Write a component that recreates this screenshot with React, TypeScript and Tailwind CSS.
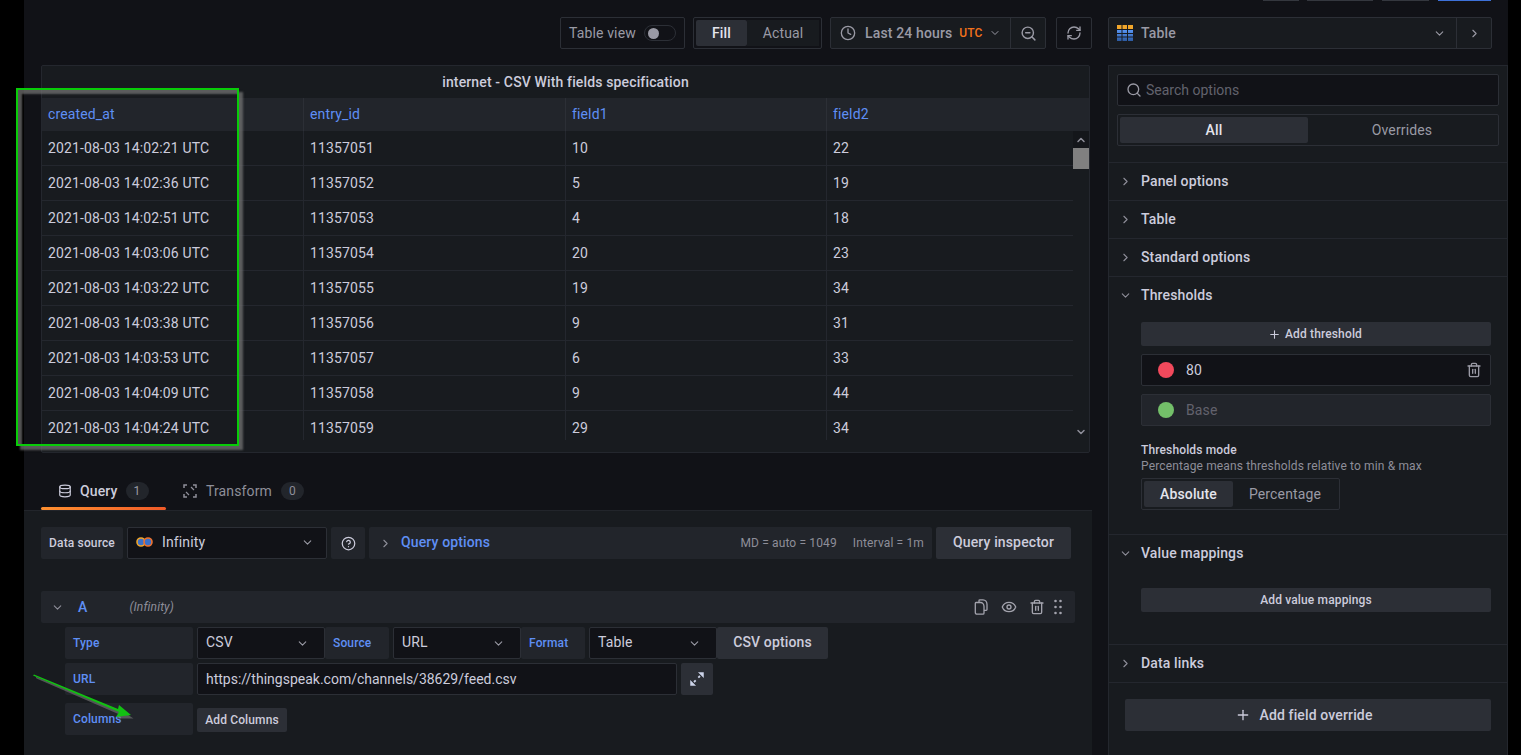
import { ChevronDown, ChevronRight, CircleHelp, Clock, Database, Eye, Plus, RefreshCw, Search, Trash2, ZoomOut } from "lucide-react";

const rows = [
  ["2021-08-03 14:02:21 UTC", "11357051", "10", "22"],
  ["2021-08-03 14:02:36 UTC", "11357052", "5", "19"],
  ["2021-08-03 14:02:51 UTC", "11357053", "4", "18"],
  ["2021-08-03 14:03:06 UTC", "11357054", "20", "23"],
  ["2021-08-03 14:03:22 UTC", "11357055", "19", "34"],
  ["2021-08-03 14:03:38 UTC", "11357056", "9", "31"],
  ["2021-08-03 14:03:53 UTC", "11357057", "6", "33"],
  ["2021-08-03 14:04:09 UTC", "11357058", "9", "44"],
  ["2021-08-03 14:04:24 UTC", "11357059", "29", "34"],
];

const TableIcon = () => (
  <svg width="16" height="16" viewBox="0 0 16 16">
    <defs>
      <linearGradient id="tblBlue" x1="0" y1="0" x2="0" y2="1">
        <stop offset="0" stopColor="#5794f2" />
        <stop offset="1" stopColor="#2c5aa0" />
      </linearGradient>
    </defs>
    <rect x="0" y="0" width="16" height="4" fill="#f2a72b" />
    <rect x="0" y="5" width="16" height="11" fill="url(#tblBlue)" />
    <path d="M5 0V16M10.500 0V16M0 8.500H16M0 12H16" stroke="#181b1f" strokeWidth="1" />
  </svg>
);

const TransformIcon = () => (
  <svg width="14" height="14" viewBox="0 0 14 14" fill="none" stroke="#8e8e99" strokeWidth="1.500">
    <path d="M1 4V1H4M10 1H13V4M13 10V13H10M4 13H1V10" />
    <path d="M3 8L6 11M8 3L11 6" strokeWidth="1.200" />
  </svg>
);

const InfinityLogo = () => (
  <svg width="17" height="12" viewBox="0 0 17 12">
    <circle cx="5" cy="6" r="4" fill="#3d71c9" stroke="#f2a72b" strokeWidth="1.600" />
    <circle cx="12" cy="6" r="4" fill="#3d71c9" stroke="#f2722b" strokeWidth="1.600" />
  </svg>
);

const Grip = () => (
  <svg width="8" height="16" viewBox="0 0 8 16" fill="#a3a3ad">
    <circle cx="1.500" cy="2" r="1.300" />
    <circle cx="6.500" cy="2" r="1.300" />
    <circle cx="1.500" cy="8" r="1.300" />
    <circle cx="6.500" cy="8" r="1.300" />
    <circle cx="1.500" cy="14" r="1.300" />
    <circle cx="6.500" cy="14" r="1.300" />
  </svg>
);

const DuplicateIcon = () => (
  <svg width="16" height="16" viewBox="0 0 16 16" fill="none" stroke="#a3a3ad" strokeWidth="1.300">
    <path d="M6 3.500V1.500C6 1 6.300 .8 6.800 .8H10C12.500 .8 14 3 14 5.500V10.500C14 11 13.700 11.300 13.200 11.300H11" />
    <path d="M3 3.500H7.500C9.500 3.500 11 5.500 11 7.500V14C11 14.700 10.600 15.200 10 15.200H4C3 15.200 2.300 14.500 2.300 13.500V4.500C2.300 3.900 2.500 3.500 3 3.500Z" />
  </svg>
);

const ExpandIcon = () => (
  <svg width="14" height="14" viewBox="0 0 14 14" fill="#ccd3e8" stroke="#ccd3e8">
    <path d="M8.500 .5H13.500V5.500Z" strokeWidth="0.500" />
    <path d="M.5 8.500V13.500H5.500Z" strokeWidth="0.500" />
    <path d="M10 4L8.300 5.700M4 10L5.700 8.300" strokeWidth="1.800" fill="none" />
  </svg>
);

const QueryLabel = ({ text, w }: { text: string; w: string }) => (
  <div className={`${w} h-[32px] flex items-center pl-[8px] bg-[#22252b] rounded-[2px] text-[12px] font-medium text-[#5f8ff5] shrink-0`}>
    {text}
  </div>
);

const Select = ({ text, w }: { text: string; w: string }) => (
  <div className={`${w} h-[32px] flex items-center justify-between pl-[8px] pr-[15px] bg-[#111217] border border-[#2c2f36] rounded-[2px] text-[14px] text-[#ccccdc] shrink-0`}>
    <span className="-mt-[2px]">{text}</span>
    <ChevronDown size={13} className="text-[#9a9aa5]" />
  </div>
);

const OptionHeader = ({ title, open }: { title: string; open?: boolean }) => (
  <div className="h-[37px] flex items-center pl-[10px] text-[14px] font-medium text-[#ccccdc]">
    {open ? (
      <ChevronDown size={13} className="text-[#8e8e99] mr-[9px]" />
    ) : (
      <ChevronRight size={13} className="text-[#8e8e99] mr-[9px]" />
    )}
    {title}
  </div>
);

export default function App() {
  return (
    <div className="relative flex h-[755px] w-[1521px] overflow-hidden bg-black font-['Roboto',sans-serif] text-[14px] tracking-[0.14px] text-[#ccccdc]">
      <div className="w-[24px] shrink-0" />

      {/* left column */}
      <div className="w-[1084px] shrink-0 flex flex-col bg-[#111217] pt-[17px]">
        <div className="h-[32px] flex justify-end gap-[8px] pr-[16px]">
          <div className="w-[125px] flex items-center gap-[8px] pl-[8px] border border-[#2c2f36] rounded-[2px] text-[#9a9aa5]">
            <span>Table view</span>
            <div className="w-[32px] h-[16px] rounded-full border border-[#2c2f36] flex items-center pl-[3px]">
              <div className="w-[11px] h-[11px] rounded-full bg-[#9a9aa5]" />
            </div>
          </div>
          <div className="w-[129px] flex items-center p-[2px] border border-[#2c2f36] rounded-[2px]">
            <div className="w-[51px] h-[26px] flex items-center justify-center bg-[#2c2f36] rounded-[2px] font-medium text-[#e4e4ec]">Fill</div>
            <div className="flex-1 h-[26px] flex items-center justify-center bg-[#181b1f] text-[#9a9aa5]">Actual</div>
          </div>
          <div className="w-[216px] mr-[2px] flex items-stretch bg-[#181b1f] border border-[#2c2f36] rounded-[2px] text-[#9a9aa5]">
            <div className="flex-1 flex items-center pl-[9px]">
              <Clock size={16} className="mr-[9px]" />
              <span className="font-medium">Last 24 hours</span>
              <span className="ml-[7px] text-[12px] font-medium text-[#f2721c]">UTC</span>
              <ChevronDown size={12} className="ml-[6px]" />
            </div>
            <div className="w-[35px] flex items-center justify-center border-l border-[#2c2f36]">
              <ZoomOut size={17} />
            </div>
          </div>
          <div className="w-[36px] flex items-center justify-center border border-[#2c2f36] rounded-[2px] text-[#9a9aa5]">
            <RefreshCw size={16} />
          </div>
        </div>

        {/* table panel */}
        <div className="ml-[17px] mt-[16px] w-[1049px] h-[388px] shrink-0 flex flex-col bg-[#181b1f] border border-[#24272e] rounded-[2px]">
          <div className="h-[32px] flex items-center justify-center font-medium">internet - CSV With fields specification</div>
          <div className="h-[33px] grid grid-cols-[261px_262px_261px_1fr] bg-[#22252b] text-[#5f8ff5]">
            {["created_at", "entry_id", "field1", "field2"].map((h, i) => (
              <div key={h} className={`flex items-center pl-[6px] ${i > 0 ? "border-l border-[#2c2f36]" : ""}`}>{h}</div>
            ))}
          </div>
          <div className="flex h-[309px] overflow-hidden">
            <div className="w-[1031px] shrink-0">
              {rows.map((r) => (
                <div key={r[0]} className="h-[35px] grid grid-cols-[261px_262px_261px_247px] border-b border-[#24272e]">
                  {r.map((c, i) => (
                    <div key={i} className={`flex items-center pl-[6px] ${i > 0 ? "border-l border-[#24272e]" : ""}`}>{c}</div>
                  ))}
                </div>
              ))}
            </div>
            <div className="w-[17px] flex flex-col items-center justify-between bg-[#181b1f]">
              <div className="w-full flex flex-col items-center">
                <div className="w-full h-[17px] flex items-center justify-center bg-[#14161a]">
                  <ChevronDown size={12} strokeWidth={3} className="rotate-180 text-[#8e8e99]" />
                </div>
                <div className="w-full h-[21px] bg-[#808080]" />
              </div>
              <ChevronDown size={12} strokeWidth={3} className="text-[#8e8e99] mb-[2px]" />
            </div>
          </div>
        </div>

        {/* tabs */}
        <div className="mt-[21px] ml-0 w-[1068px] h-[37px] shrink-0 flex pl-[17px] border-b border-[#22252b]">
          <div className="relative w-[125px] flex items-center pl-[17px] pb-[2px] font-medium text-[#ccccdc]">
            <Database size={14} className="mr-[8px]" />
            Query
            <span className="ml-[8px] w-[23px] h-[18px] flex items-center justify-center rounded-full bg-[#22252b] text-[12px] font-normal text-[#9a9aa5]">1</span>
            <div className="absolute left-0 right-0 bottom-0 h-[3px] rounded-[2px] bg-gradient-to-r from-[#ff9030] to-[#f05a28]" />
          </div>
          <div className="flex items-center pl-[17px] pb-[2px] text-[#8e8e99]">
            <TransformIcon />
            <span className="ml-[9px]">Transform</span>
            <span className="ml-[9px] w-[23px] h-[18px] flex items-center justify-center rounded-full bg-[#22252b] text-[12px]">0</span>
          </div>
        </div>

        {/* query editor */}
        <div className="w-[1068px] flex-1 bg-[#181b1f] pl-[17px] pt-[16px]">
          <div className="flex gap-[4px] h-[32px]">
            <div className="w-[82px] flex items-center justify-center bg-[#22252b] rounded-[2px] text-[12px] font-medium">Data source</div>
            <div className="w-[200px] flex items-center justify-between pl-[8px] pr-[12px] pb-[2px] bg-[#111217] border border-[#2c2f36] rounded-[2px]">
              <div className="flex items-center gap-[9px]">
                <InfinityLogo />
                Infinity
              </div>
              <ChevronDown size={13} className="text-[#9a9aa5]" />
            </div>
            <div className="w-[34px] flex items-center justify-center bg-[#22252b] rounded-[2px]">
              <CircleHelp size={15} />
            </div>
            <div className="w-[563px] flex items-center bg-[#22252b] rounded-[2px] pl-[10px] pr-[8px]">
              <ChevronRight size={13} className="text-[#8e8e99] mr-[9px]" />
              <span className="font-medium text-[#5f8ff5] -mt-[2px]">Query options</span>
              <span className="ml-auto text-[12px] text-[#8e8e99]">MD = auto = 1049</span>
              <span className="ml-[16px] text-[12px] text-[#8e8e99]">Interval = 1m</span>
            </div>
            <div className="w-[135px] flex items-center justify-center pb-[2px] bg-[#2c2f36] rounded-[2px] font-medium">Query inspector</div>
          </div>

          <div className="mt-[32px] w-[1034px] h-[32px] flex items-center bg-[#22252b] rounded-[2px] pl-[10px] pr-[13px]">
            <ChevronDown size={13} className="text-[#8e8e99]" />
            <span className="ml-[14px] font-medium text-[#5f8ff5]">A</span>
            <span className="ml-[42px] text-[12px] italic text-[#8e8e99]">(Infinity)</span>
            <div className="ml-auto flex items-center text-[#a3a3ad]">
              <DuplicateIcon />
              <Eye size={16} className="ml-[12px]" />
              <Trash2 size={16} className="ml-[12px]" />
              <div className="ml-[9px]"><Grip /></div>
            </div>
          </div>

          <div className="ml-[24px] mt-[4px] flex flex-col gap-[4px]">
            <div className="flex h-[32px]">
              <QueryLabel text="Type" w="w-[128px]" />
              <div className="w-[4px]" />
              <Select text="CSV" w="w-[128px]" />
              <QueryLabel text="Source" w="w-[64px]" />
              <div className="w-[4px]" />
              <Select text="URL" w="w-[128px]" />
              <QueryLabel text="Format" w="w-[64px]" />
              <div className="w-[4px]" />
              <Select text="Table" w="w-[128px]" />
              <div className="w-[111px] flex items-center justify-center pb-[2px] bg-[#2c2f36] rounded-[2px] font-medium">CSV options</div>
            </div>
            <div className="flex h-[32px] gap-[4px]">
              <QueryLabel text="URL" w="w-[128px]" />
              <div className="w-[480px] flex items-center pl-[8px] bg-[#111217] border border-[#2c2f36] rounded-[2px] tracking-normal">
                https://thingspeak.com/channels/38629/feed.csv
              </div>
              <div className="w-[32px] flex items-center justify-center bg-[#2c2f36] rounded-[2px]">
                <ExpandIcon />
              </div>
            </div>
            <div className="flex h-[32px] gap-[4px] mt-[4px] items-center">
              <QueryLabel text="Columns" w="w-[128px]" />
              <div className="w-[90px] h-[24px] mt-[2px] flex items-center justify-center bg-[#2c2f36] rounded-[2px] text-[12px] font-medium">Add Columns</div>
            </div>
          </div>
        </div>
      </div>

      {/* right column */}
      <div className="w-[400px] shrink-0 flex flex-col bg-[#111217]">
        <div className="h-[17px] flex justify-end gap-[9px] pr-[17px] items-start">
          <div className="w-[36px] h-px bg-[#34373e] mr-[-1px]" />
          <div className="w-[66px] h-px bg-[#34373e]" />
          <div className="w-[47px] h-px bg-[#34373e]" />
          <div className="w-[53px] h-px bg-[#3d71d9]" />
        </div>
        <div className="w-[384px] h-[32px] flex items-stretch bg-[#181b1f] border border-[#2c2f36] rounded-[2px] text-[#9a9aa5] shrink-0">
          <div className="flex-1 flex items-center pl-[8px]">
            <TableIcon />
            <span className="ml-[8px] font-medium">Table</span>
            <ChevronDown size={13} className="ml-auto mr-[10px]" />
          </div>
          <div className="w-[35px] flex items-center justify-center border-l border-[#2c2f36]">
            <ChevronRight size={13} />
          </div>
        </div>

        <div className="mt-[16px] flex-1 flex flex-col bg-[#181b1f] border border-[#24272e] border-b-0">
          <div className="h-[97px] shrink-0 px-[8px] pt-[8px] border-b border-[#24272e]">
            <div className="h-[32px] flex items-center pl-[8px] bg-[#111217] border border-[#2c2f36] rounded-[2px] text-[#62626d] tracking-normal">
              <Search size={16} className="text-[#9a9aa5] mr-[4px]" />
              Search options
            </div>
            <div className="mt-[8px] h-[32px] flex p-[2px] border border-[#2c2f36] rounded-[2px]">
              <div className="w-[188px] flex items-center justify-center bg-[#2c2f36] rounded-[2px] font-medium text-[#e4e4ec]">All</div>
              <div className="flex-1 flex items-center justify-center text-[#9a9aa5]">Overrides</div>
            </div>
          </div>

          <div className="border-b border-[#24272e]"><OptionHeader title="Panel options" /></div>
          <div className="border-b border-[#24272e]"><OptionHeader title="Table" /></div>
          <div className="border-b border-[#24272e]"><OptionHeader title="Standard options" /></div>

          <div className="h-[258px] shrink-0 border-b border-[#24272e]">
            <OptionHeader title="Thresholds" open />
            <div className="ml-[32px] mr-[16px] mt-[8px]">
              <div className="h-[24px] flex items-center justify-center gap-[4px] pr-[2px] bg-[#2c2f36] rounded-[2px] text-[12px] font-medium">
                <Plus size={13} />
                Add threshold
              </div>
              <div className="mt-[8px] h-[32px] flex items-center pl-[16px] pr-[8px] bg-[#111217] border border-[#2c2f36] rounded-[2px]">
                <div className="w-[16px] h-[16px] rounded-full bg-[#f2495c]" />
                <span className="ml-[12px]">80</span>
                <Trash2 size={16} className="ml-auto text-[#9a9aa5]" />
              </div>
              <div className="mt-[8px] h-[32px] flex items-center pl-[16px] bg-[#22252b] border border-[#2c2f36] rounded-[2px] text-[#62626d]">
                <div className="w-[16px] h-[16px] rounded-full bg-[#73bf69]" />
                <span className="ml-[12px]">Base</span>
              </div>
              <div className="mt-[16px] text-[12px] leading-[16px] font-medium">Thresholds mode</div>
              <div className="text-[12px] leading-[16px] text-[#8e8e99]">Percentage means thresholds relative to min &amp; max</div>
              <div className="mt-[4px] w-[199px] h-[32px] flex p-[2px] border border-[#2c2f36] rounded-[2px]">
                <div className="w-[89px] flex items-center justify-center bg-[#2c2f36] rounded-[2px] font-medium text-[#e4e4ec]">Absolute</div>
                <div className="flex-1 flex items-center justify-center text-[#9a9aa5]">Percentage</div>
              </div>
            </div>
          </div>

          <div className="h-[110px] shrink-0 border-b border-[#24272e]">
            <OptionHeader title="Value mappings" open />
            <div className="ml-[32px] mr-[16px] mt-[16px] h-[24px] flex items-center justify-center bg-[#2c2f36] rounded-[2px] text-[12px] font-medium">
              Add value mappings
            </div>
          </div>
          <div className="border-b border-[#24272e]"><OptionHeader title="Data links" /></div>

          <div className="px-[16px] pt-[16px]">
            <div className="h-[32px] flex items-center justify-center gap-[8px] pr-[8px] bg-[#2c2f36] rounded-[2px] font-medium">
              <Plus size={16} />
              Add field override
            </div>
          </div>
        </div>
      </div>

      <div className="flex-1" />

      {/* green annotations drawn over the screenshot */}
      <div className="absolute left-[16px] top-[88px] w-[223px] h-[358px] border-[2px] border-[#08cc08] shadow-[4px_4px_2px_rgba(120,120,120,0.7),inset_4px_4px_2px_rgba(120,120,120,0.7)]" />
      <svg className="absolute left-0 top-0 pointer-events-none" width="160" height="755" viewBox="0 0 160 755">
        <polygon points="35,676 34,674 119,708 117,706 132,716 116,716 118,712" fill="#7a7a7a" opacity="0.6" transform="translate(1.500 2.500)" />
        <polygon points="34,674.500 33,675.500 119,712 116,717 131,715 119,705 118,709" fill="#12c012" />
      </svg>
    </div>
  );
}
